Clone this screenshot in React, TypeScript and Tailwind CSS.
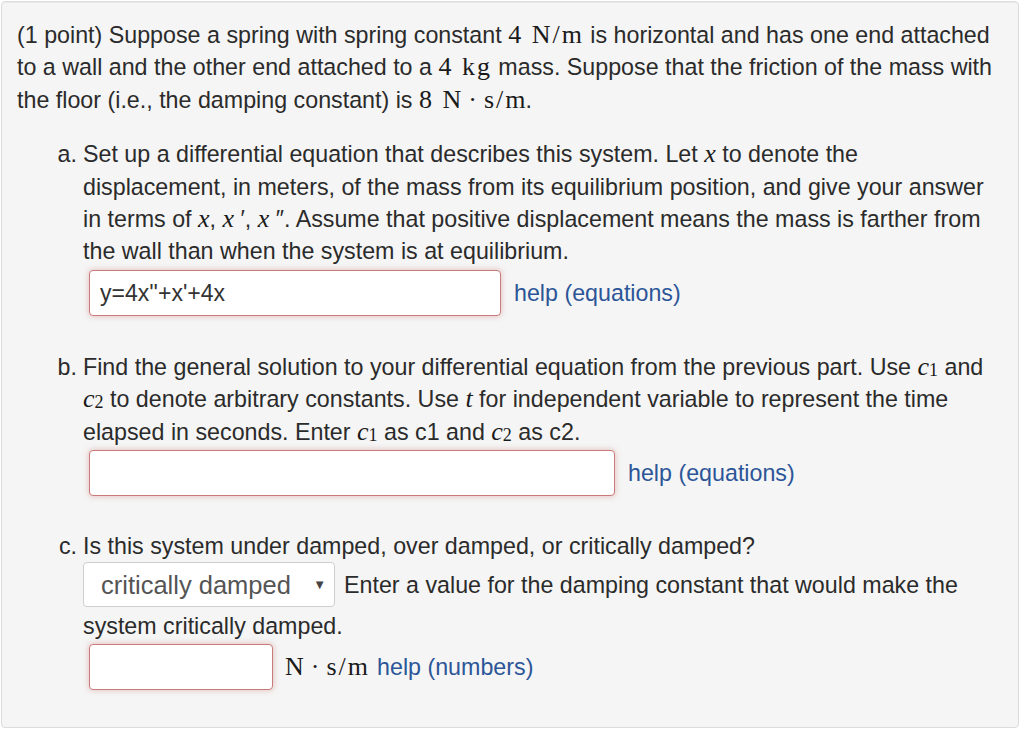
import React from "react";

const M = ({ children, className = "" }: { children: React.ReactNode; className?: string }) => (
  <span className={`font-['Liberation_Serif',serif] text-[26px] tracking-[2px] text-[#1a1a1a] ${className}`}>{children}</span>
);
const I = ({ children }: { children: React.ReactNode }) => (
  <span className="font-['Liberation_Serif',serif] italic text-[26px] text-[#1a1a1a]">{children}</span>
);
const C = ({ n }: { n: string }) => (
  <span className="font-['Liberation_Serif',serif] italic text-[26px] text-[#1a1a1a]">
    c<sub className="not-italic text-[18px] relative top-[1px]">{n}</sub>
  </span>
);
const Dot = () => <span className="mx-[5px]">·</span>;

const Input = ({ w, value = "" }: { w: string; value?: string }) => (
  <div
    className={`${w} h-[46px] bg-white border border-[#c97b7b] rounded-[4px] shadow-[0_0_6px_rgba(185,74,72,0.35)] flex items-center px-[10px] text-[23px] text-[#333]`}
  >
    {value}
  </div>
);

const Link = ({ children }: { children: React.ReactNode }) => (
  <span className="text-[#2c5598]">{children}</span>
);

export default function App() {
  return (
    <div className="w-[1024px] h-[731px] bg-white p-[1px] font-['Liberation_Sans',Arial,sans-serif] text-[23.25px] leading-[32.4px] text-[#2b2b2b]">
      <div className="h-[727px] w-[1018px] bg-[#f5f5f5] border border-[#dcdcdc] rounded-[4px] pl-[15px] pt-[17px] shadow-[inset_0_1px_1px_rgba(0,0,0,0.05)] whitespace-nowrap">
        <p>
          (1 point) Suppose a spring with spring constant <M>4 N/m</M> is horizontal and has one end attached
          <br />
          to a wall and the other end attached to a <M>4 kg</M> mass. Suppose that the friction of the mass with
          <br />
          the floor (i.e., the damping constant) is{" "}
          <M className="-mr-[2px]">
            8 N<Dot />s/m
          </M>
          .
        </p>

        {/* a */}
        <div className="mt-[22px] flex">
          <div className="w-[66px] text-right pr-[6px]">a.</div>
          <div className="flex-1">
            <p>
              Set up a differential equation that describes this system. Let <I>x</I> to denote the
              <br />
              displacement, in meters, of the mass from its equilibrium position, and give your answer
              <br />
              in terms of <I>x</I>, <I>x</I> ′, <I>x</I> ″. Assume that positive displacement means the mass is farther from
              <br />
              the wall than when the system is at equilibrium.
            </p>
            <div className="mt-[2px] ml-[6px] flex items-center gap-[13px]">
              <Input w="w-[412px]" value={"y=4x''+x'+4x"} />
              <Link>help (equations)</Link>
            </div>
          </div>
        </div>

        {/* b */}
        <div className="mt-[35px] flex">
          <div className="w-[66px] text-right pr-[6px]">b.</div>
          <div className="flex-1">
            <p>
              Find the general solution to your differential equation from the previous part. Use <C n="1" /> and
              <br />
              <C n="2" /> to denote arbitrary constants. Use <I>t</I> for independent variable to represent the time
              <br />
              elapsed in seconds. Enter <C n="1" /> as c1 and <C n="2" /> as c2.
            </p>
            <div className="mt-[2px] ml-[6px] flex items-center gap-[13px]">
              <Input w="w-[526px]" />
              <Link>help (equations)</Link>
            </div>
          </div>
        </div>

        {/* c */}
        <div className="mt-[34px] flex">
          <div className="w-[66px] text-right pr-[6px]">c.</div>
          <div className="flex-1">
            <p>Is this system under damped, over damped, or critically damped?</p>
            <div className="flex items-center gap-[9px]">
              <div className="w-[252px] h-[45px] bg-white border border-[#cfcfcf] rounded-[4px] flex items-center pl-[17px] pr-[8px] text-[25.5px] text-[#555]">
                <span className="flex-1">critically damped</span>
                <span className="text-[13px] text-[#444]">▼</span>
              </div>
              <span>Enter a value for the damping constant that would make the</span>
            </div>
            <p className="mt-[3px]">system critically damped.</p>
            <div className="mt-[1px] ml-[6px] flex items-center">
              <Input w="w-[184px]" />
              <span className="ml-[12px] mr-[9px]">
                <M className="-mr-[2px]">
                  N<Dot />s/m
                </M>
              </span>
              <Link>help (numbers)</Link>
            </div>
          </div>
        </div>
      </div>
    </div>
  );
}
